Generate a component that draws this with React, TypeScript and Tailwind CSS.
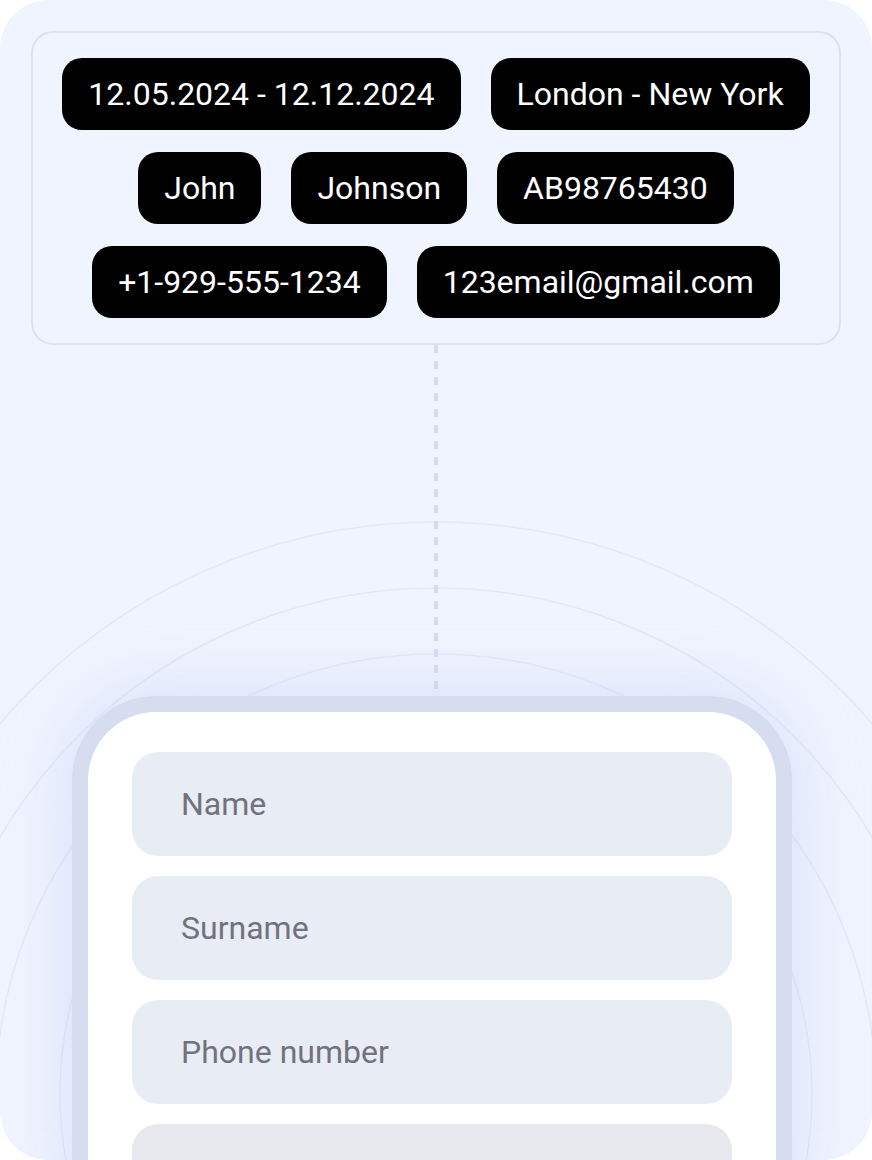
const chips = [
  "12.05.2024 - 12.12.2024",
  "London - New York",
  "John",
  "Johnson",
  "AB98765430",
  "+1-929-555-1234",
  "123email@gmail.com",
];

const fields = [
  { label: "Name", bg: "bg-[#e8ecf5]" },
  { label: "Surname", bg: "bg-[#e8ecf5]" },
  { label: "Phone number", bg: "bg-[#e8ecf5]" },
  { label: "", bg: "bg-[#e8e9ee]" },
];

const Rings = () => (
  <svg
    className="absolute left-0 top-0 pointer-events-none"
    width="872"
    height="1160"
    viewBox="0 0 872 1160"
    fill="none"
  >
    {[572, 506, 440, 376].map((r) => (
      <circle key={r} cx="436" cy="1094" r={r} stroke="#e3e8f4" strokeWidth="1.5" />
    ))}
  </svg>
);

export default function App() {
  return (
    <div className="w-[872px] h-[1160px] bg-white" style={{ fontFamily: "Roboto, 'Noto Sans', sans-serif" }}>
      <div className="relative w-[872px] h-[1160px] bg-[#f0f4fe] rounded-[48px] overflow-hidden">
        <Rings />
        <div className="relative flex flex-col pt-[31px]">
          <div className="mx-[31px] h-[314px] border-2 border-[#dbe1f2] rounded-[22px] px-[20px] pt-[25px] flex flex-wrap justify-center content-start gap-x-[30px] gap-y-[22px]">
            {chips.map((c) => (
              <div
                key={c}
                className="h-[72px] px-[26px] rounded-[20px] bg-black text-white text-[32px] leading-none flex items-center whitespace-nowrap"
              >
                {c}
              </div>
            ))}
          </div>
          <div className="mx-auto w-[4px] h-[351px] bg-[repeating-linear-gradient(to_bottom,#d5dcee_0px,#d5dcee_8px,transparent_8px,transparent_16px)]" />
          <div className="ml-[72px] w-[720px] h-[500px] bg-white border-[16px] border-b-0 border-[#d6ddef] rounded-t-[84px] shadow-[0_0_70px_rgba(190,204,242,0.55)] px-[44px] pt-[40px] flex flex-col gap-[20px]">
            {fields.map((f, i) => (
              <div
                key={i}
                className={`h-[104px] shrink-0 rounded-[26px] ${f.bg} pl-[49px] flex items-center text-[32px] text-[#71727d]`}
              >
                {f.label}
              </div>
            ))}
          </div>
        </div>
      </div>
    </div>
  );
}
